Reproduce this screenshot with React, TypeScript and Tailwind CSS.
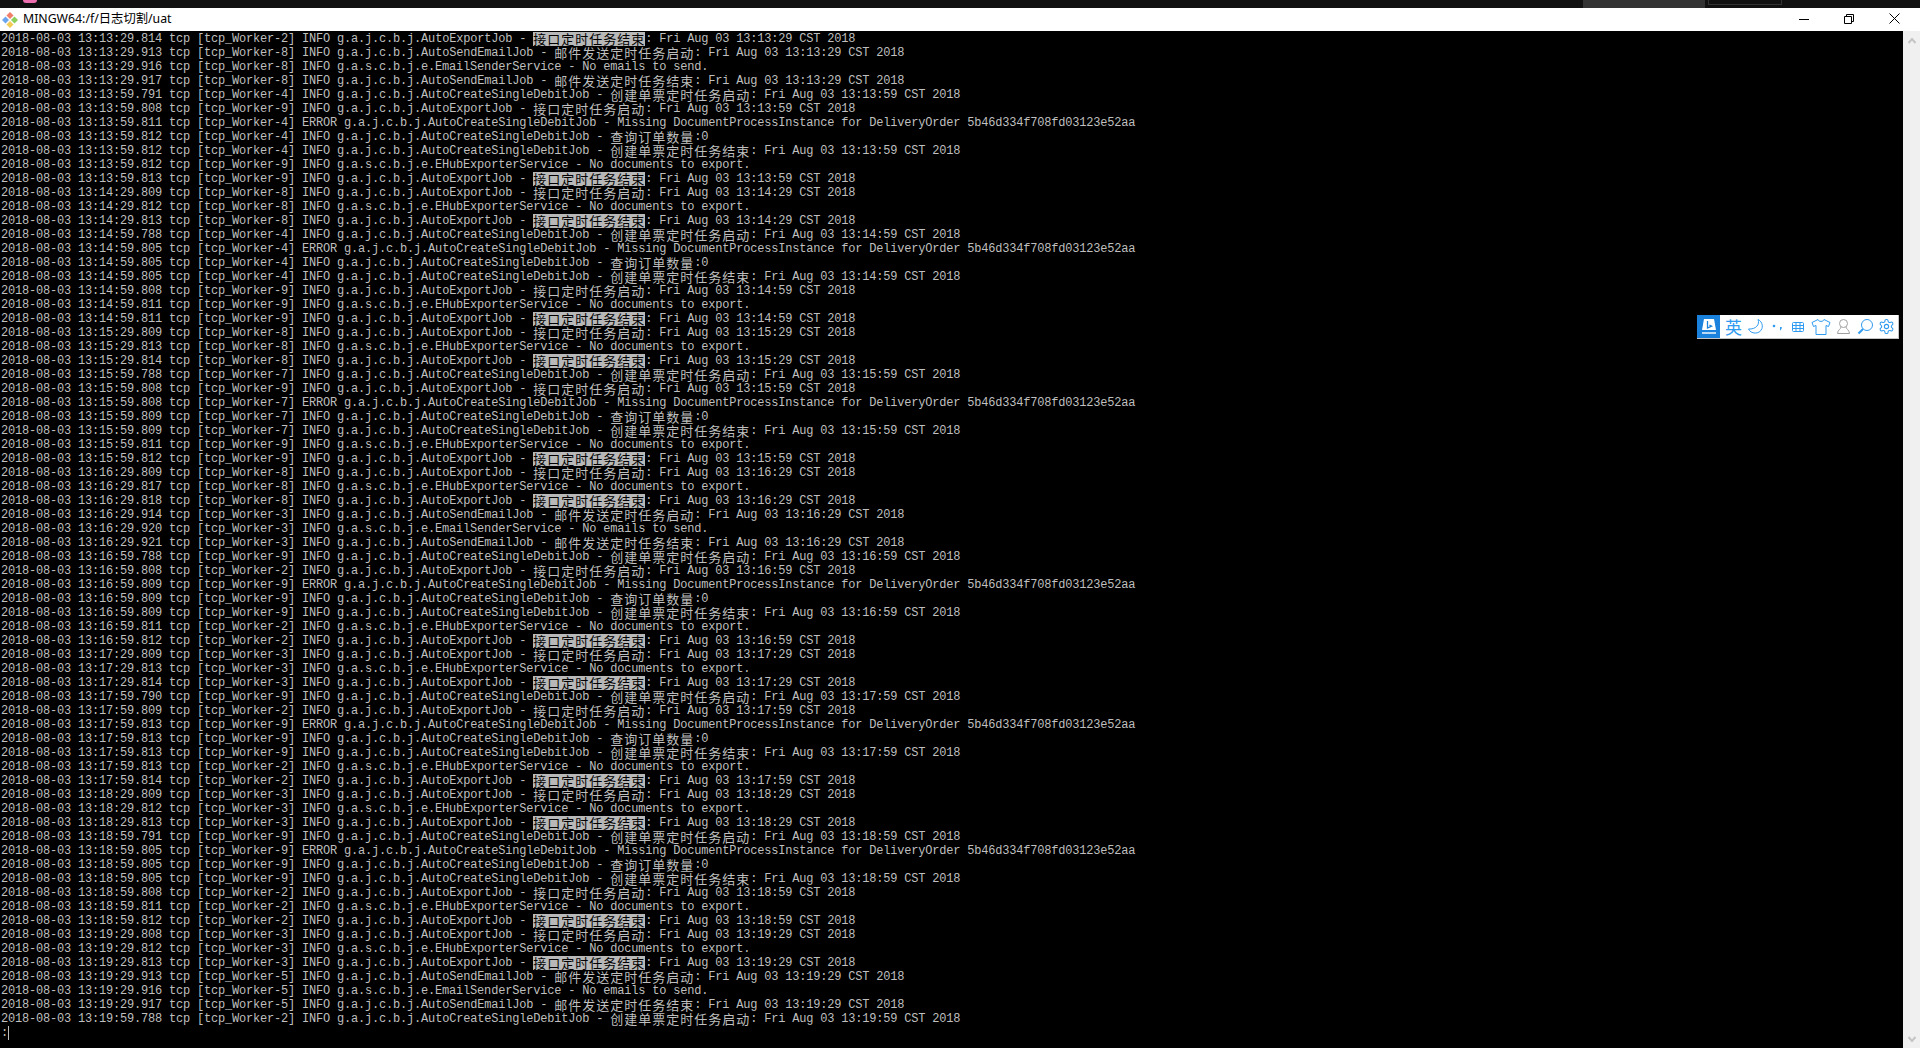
const rows = `13:13:29.814 2 EE
13:13:29.913 8 MS
13:13:29.916 8 MN
13:13:29.917 8 ME
13:13:59.791 4 CS
13:13:59.808 9 ES
13:13:59.811 4 CX
13:13:59.812 4 CQ
13:13:59.812 4 CE
13:13:59.812 9 ED
13:13:59.813 9 EE
13:14:29.809 8 ES
13:14:29.812 8 ED
13:14:29.813 8 EE
13:14:59.788 4 CS
13:14:59.805 4 CX
13:14:59.805 4 CQ
13:14:59.805 4 CE
13:14:59.808 9 ES
13:14:59.811 9 ED
13:14:59.811 9 EE
13:15:29.809 8 ES
13:15:29.813 8 ED
13:15:29.814 8 EE
13:15:59.788 7 CS
13:15:59.808 9 ES
13:15:59.808 7 CX
13:15:59.809 7 CQ
13:15:59.809 7 CE
13:15:59.811 9 ED
13:15:59.812 9 EE
13:16:29.809 8 ES
13:16:29.817 8 ED
13:16:29.818 8 EE
13:16:29.914 3 MS
13:16:29.920 3 MN
13:16:29.921 3 ME
13:16:59.788 9 CS
13:16:59.808 2 ES
13:16:59.809 9 CX
13:16:59.809 9 CQ
13:16:59.809 9 CE
13:16:59.811 2 ED
13:16:59.812 2 EE
13:17:29.809 3 ES
13:17:29.813 3 ED
13:17:29.814 3 EE
13:17:59.790 9 CS
13:17:59.809 2 ES
13:17:59.813 9 CX
13:17:59.813 9 CQ
13:17:59.813 9 CE
13:17:59.813 2 ED
13:17:59.814 2 EE
13:18:29.809 3 ES
13:18:29.812 3 ED
13:18:29.813 3 EE
13:18:59.791 9 CS
13:18:59.805 9 CX
13:18:59.805 9 CQ
13:18:59.805 9 CE
13:18:59.808 2 ES
13:18:59.811 2 ED
13:18:59.812 2 EE
13:19:29.808 3 ES
13:19:29.812 3 ED
13:19:29.813 3 EE
13:19:29.913 5 MS
13:19:29.916 5 MN
13:19:29.917 5 ME
13:19:59.788 2 CS`.split('\n');

const EXPORT = 'g.a.j.c.b.j.AutoExportJob';
const CREATE = 'g.a.j.c.b.j.AutoCreateSingleDebitJob';
const MAIL = 'g.a.j.c.b.j.AutoSendEmailJob';

function Cjk({ children, mark }: { children: string; mark?: boolean }) {
  return (
    <span
      className={`inline-block h-[14px] align-top font-['Noto_Sans_CJK_SC',sans-serif] text-[13px] leading-[14px] tracking-[1px] ${mark ? 'bg-[#b8b8b8] text-black' : ''}`}
    >
      {children}
    </span>
  );
}

function Message({ kind, stamp }: { kind: string; stamp: string }) {
  const date = `: Fri Aug 03 ${stamp} CST 2018`;
  switch (kind) {
    case 'EE':
      return <>INFO {EXPORT} - <Cjk mark>接口定时任务结束</Cjk>{date}</>;
    case 'ES':
      return <>INFO {EXPORT} - <Cjk>接口定时任务启动</Cjk>{date}</>;
    case 'ED':
      return <>INFO g.a.s.c.b.j.e.EHubExporterService - No documents to export.</>;
    case 'CS':
      return <>INFO {CREATE} - <Cjk>创建单票定时任务启动</Cjk>{date}</>;
    case 'CE':
      return <>INFO {CREATE} - <Cjk>创建单票定时任务结束</Cjk>{date}</>;
    case 'CQ':
      return <>INFO {CREATE} - <Cjk>查询订单数量</Cjk>:0</>;
    case 'CX':
      return <>ERROR {CREATE} - Missing DocumentProcessInstance for DeliveryOrder 5b46d334f708fd03123e52aa</>;
    case 'MS':
      return <>INFO {MAIL} - <Cjk>邮件发送定时任务启动</Cjk>{date}</>;
    case 'ME':
      return <>INFO {MAIL} - <Cjk>邮件发送定时任务结束</Cjk>{date}</>;
    default:
      return <>INFO g.a.s.c.b.j.e.EmailSenderService - No emails to send.</>;
  }
}

function LogRow({ row }: { row: string }) {
  const [time, worker, kind] = row.split(' ');
  return (
    <div className="h-[14px] whitespace-pre">
      2018-08-03 {time} tcp [tcp_Worker-{worker}] <Message kind={kind} stamp={time.slice(0, 8)} />
    </div>
  );
}

function GitIcon() {
  return (
    <svg width="16" height="16" viewBox="0 0 16 16" className="ml-[2px]">
      <rect x="5.500" y="1" width="5" height="5" transform="rotate(45 8 3.500)" fill="#f0806a" />
      <rect x="1" y="5.500" width="5" height="5" transform="rotate(45 3.500 8)" fill="#6aa5ee" />
      <rect x="10" y="5.500" width="5" height="5" transform="rotate(45 12.500 8)" fill="#8ccf5a" />
      <rect x="5.500" y="10" width="5" height="5" transform="rotate(45 8 12.500)" fill="#f2cd55" />
    </svg>
  );
}

function ImeBar() {
  return (
    <div className="absolute right-[21px] top-[315px] flex h-[24px] w-[202px] items-center border-r border-b border-[#c4c4c4] bg-white text-[#2f9bf0]">
      <div className="flex h-full w-[23px] items-center justify-center bg-[#1a82dc]">
        <svg width="16" height="17" viewBox="0 0 16 17">
          <path d="M3 1h10l2 11H1z" fill="#fff" />
          <path d="M6.500 3v7l4-1.800-2-1" fill="none" stroke="#1a82dc" strokeWidth="1.300" />
          <path d="M1 15h14" stroke="#fff" strokeWidth="1.400" />
        </svg>
      </div>
      <span className="ml-[5px] w-[18px] font-['Noto_Sans_CJK_SC',sans-serif] text-[17px] leading-[18px]">英</span>
      <svg width="17" height="17" viewBox="0 0 17 17" fill="none" stroke="currentColor" className="ml-[4px]">
        <path d="M11 1.500c2 5-2 10-9.500 9.500 2 5 11 6 13.500-.5C16 7 14.500 3 11 1.500z" />
      </svg>
      <svg width="12" height="12" viewBox="0 0 12 12" className="ml-[7px]" fill="currentColor">
        <circle cx="3" cy="5" r="1.300" />
        <path d="M9 6h1.800c0 2-.8 3-1.800 3.500z" />
      </svg>
      <svg width="14" height="14" viewBox="0 0 14 14" fill="none" stroke="currentColor" className="ml-[8px]">
        <path d="M2.500 2.500h9a1 1 0 0 1 1 1v7a1 1 0 0 1-1 1h-9a1 1 0 0 1-1-1v-7a1 1 0 0 1 1-1zM1.500 5.500h11M1.500 8.500h11M5 2.500v9M9 2.500v9" />
      </svg>
      <svg width="20" height="18" viewBox="0 0 20 18" fill="none" stroke="currentColor" className="ml-[6px]">
        <path d="M7 1.500 1 4.500l1.500 4 2.500-1v9h10v-9l2.500 1 1.500-4-6-3c-.5 2.500-5.500 2.500-6 0z" />
      </svg>
      <svg width="15" height="17" viewBox="0 0 15 17" fill="none" stroke="#a0a0a0" className="ml-[5px]">
        <circle cx="7.500" cy="5.500" r="4" />
        <path d="M5 9c0 2-3.500 3-3.500 6.500h12C13.500 12 10 11 10 9" />
      </svg>
      <svg width="17" height="17" viewBox="0 0 17 17" fill="none" stroke="currentColor" className="ml-[6px]">
        <circle cx="10" cy="7" r="5.500" />
        <path d="M6 11 1.500 15.500" strokeWidth="2" />
      </svg>
      <svg width="17" height="17" viewBox="0 0 24 24" fill="none" stroke="currentColor" strokeWidth="1.500" className="ml-[4px]">
        <circle cx="12" cy="12" r="3" />
        <path d="M12.220 2h-.440a2 2 0 0 0-2 2v.180a2 2 0 0 1-1 1.730l-.430.250a2 2 0 0 1-2 0l-.150-.080a2 2 0 0 0-2.730.730l-.220.380a2 2 0 0 0 .730 2.730l.150.100a2 2 0 0 1 1 1.720v.510a2 2 0 0 1-1 1.740l-.150.090a2 2 0 0 0-.730 2.730l.220.380a2 2 0 0 0 2.730.730l.150-.080a2 2 0 0 1 2 0l.430.250a2 2 0 0 1 1 1.730V20a2 2 0 0 0 2 2h.440a2 2 0 0 0 2-2v-.180a2 2 0 0 1 1-1.730l.430-.250a2 2 0 0 1 2 0l.150.080a2 2 0 0 0 2.730-.730l.220-.390a2 2 0 0 0-.730-2.730l-.150-.080a2 2 0 0 1-1-1.740v-.500a2 2 0 0 1 1-1.740l.150-.090a2 2 0 0 0 .730-2.730l-.220-.380a2 2 0 0 0-2.730-.730l-.150.080a2 2 0 0 1-2 0l-.430-.250a2 2 0 0 1-1-1.730V4a2 2 0 0 0-2-2z" />
      </svg>
    </div>
  );
}

export default function App() {
  return (
    <div className="relative flex h-[1048px] w-[1920px] flex-col overflow-hidden bg-black">
      <div className="flex h-2 bg-[#111111]">
        <div className="ml-[23px] h-[3px] w-[14px] rounded-b-full bg-[#ee6fb0]" />
        <div className="ml-[1546px] h-2 w-[122px] bg-[#333333]" />
        <div className="ml-[3px] h-[5px] w-[74px] border-x border-b border-[#333333]" />
      </div>

      <div className="flex h-[23px] items-center bg-white">
        <GitIcon />
        <span className="ml-[5px] font-['Noto_Sans','Noto_Sans_CJK_SC',sans-serif] text-[12.300px] text-black">
          MINGW64:/f/日志切割/uat
        </span>
        <div className="ml-auto flex items-center pb-[2px] text-black">
          <svg width="10" height="10" viewBox="0 0 10 10" stroke="currentColor" fill="none">
            <path d="M0 5.500h10" />
          </svg>
          <svg width="10" height="10" viewBox="0 0 10 10" stroke="currentColor" fill="none" className="ml-[35px]">
            <path d="M.5 2.500h7v7h-7zM2.500 2.500v-2h7v7h-2" />
          </svg>
          <svg width="11" height="11" viewBox="0 0 11 11" stroke="currentColor" fill="none" className="ml-[35px] mr-[20px]">
            <path d="M.5.5l10 10M10.500.5l-10 10" />
          </svg>
        </div>
      </div>

      <div className="flex flex-1">
        <div className="flex-1 pt-px pl-px font-['Liberation_Mono','Noto_Sans_CJK_SC',monospace] text-[12px] leading-[14px] tracking-[-0.2px] text-[#bfbfbf]">
          {rows.map((row, i) => (
            <LogRow key={i} row={row} />
          ))}
          <div className="flex h-[14px] items-center">
            :<div className="h-[14px] w-px bg-[#bfbfbf]" />
          </div>
        </div>
        <div className="flex w-[17px] flex-col items-center justify-between bg-[#f0f0f0] pt-[6px] pb-[5px]">
          <svg width="8" height="7" viewBox="0 0 8 7" fill="none" stroke="#c4c4c4" strokeWidth="2">
            <path d="M.5 6 4 2l3.500 4" />
          </svg>
          <svg width="8" height="7" viewBox="0 0 8 7" fill="none" stroke="#c4c4c4" strokeWidth="2">
            <path d="M.5 1 4 5l3.500-4" />
          </svg>
        </div>
      </div>

      <ImeBar />
    </div>
  );
}
